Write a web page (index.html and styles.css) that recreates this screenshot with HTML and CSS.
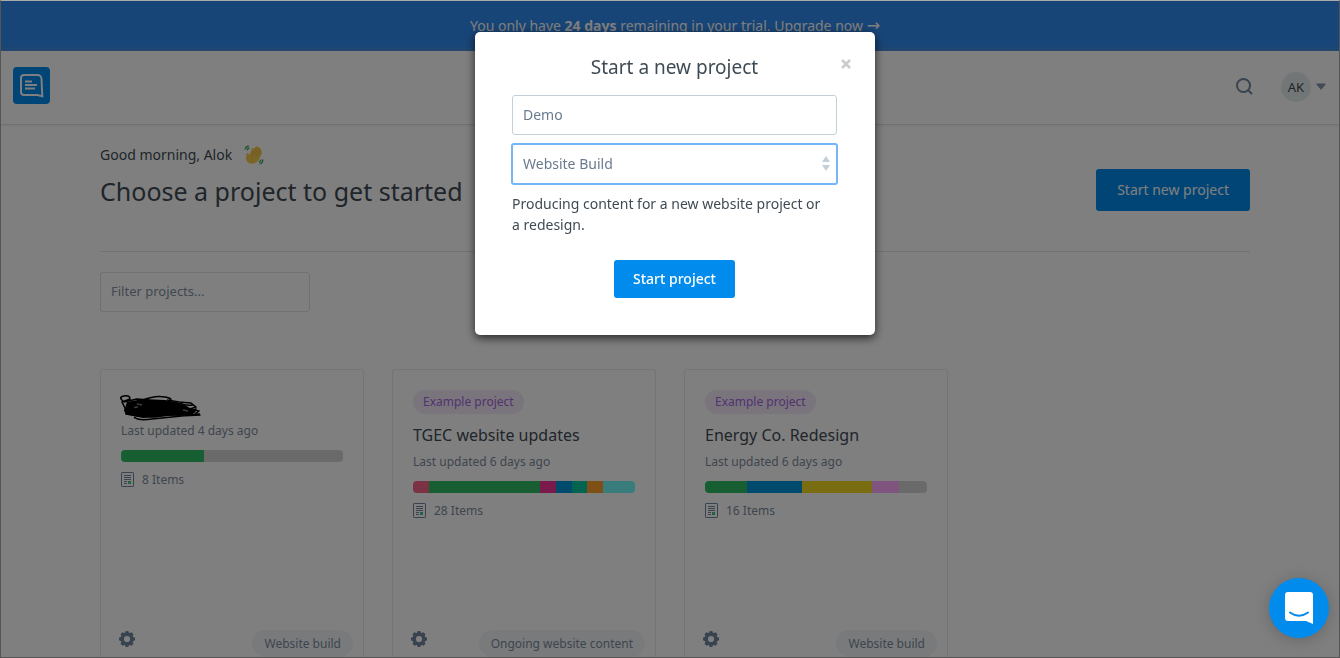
FILE: index.html
```html
<!DOCTYPE html>
<html lang="en">
<head>
    <meta charset="UTF-8">
    <meta name="viewport" content="width=device-width, initial-scale=1.0">
    <title>Projects</title>
    <link rel="stylesheet" href="styles.css">
</head>
<body>
    <svg class="sprite" aria-hidden="true">
        <symbol id="icon-items" viewBox="0 0 13 15">
            <rect x="0.5" y="0.5" width="12" height="14" rx="0.6" fill="none" stroke="#73869f"/>
            <path d="M3 3.5h7M3 5.5h7M3 7.5h7M3 9.5h3M3 11.5h3" fill="none" stroke="#73869f"/>
            <rect x="7" y="9" width="3" height="3" fill="#47c97e"/>
        </symbol>
        <symbol id="icon-gear" viewBox="0 0 16 16">
            <path fill="#73869f" fill-rule="evenodd" d="M6.7 0h2.600l.6 1.700.8.300 1.800-.8 2 2-.8 1.800.3.800 2 .9v2.600l-2 .9-.3.800.8 1.800-2 2-1.800-.8-.8.300-.6 1.700H6.700l-.6-1.700-.8-.3-1.800.8-2-2 .8-1.800-.3-.8-2-.9V6.700l2-.9.3-.8-.8-1.800 2-2 1.800.8.8-.3zM8 4.900a3.100 3.100 0 1 0 0 6.200 3.100 3.100 0 0 0 0-6.200z"/>
        </symbol>
    </svg>

    <div class="trial-banner">
        <span>You only have <strong>24 days</strong> remaining in your trial. <a href="#">Upgrade now <span class="arrow">→</span></a></span>
    </div>

    <header class="header">
        <a class="logo" href="#" aria-label="Home">
            <svg width="37" height="37" viewBox="0 0 37 37">
                <path d="M11 8h13.500a4 4 0 0 1 4 4l.8 17.300-5-1.300H11a3 3 0 0 1-3-3V11a3 3 0 0 1 3-3z" fill="none" stroke="#fff" stroke-width="2"/>
                <path d="M12 14.500h7M12 18h12M12 21.500h10" fill="none" stroke="#fff" stroke-width="2"/>
            </svg>
        </a>
        <div class="header-actions">
            <button class="icon-button" type="button" aria-label="Search">
                <svg width="17" height="17" viewBox="0 0 17 17" fill="none" stroke="#73869f" stroke-width="2">
                    <circle cx="7.500" cy="7.500" r="6.500"/>
                    <path d="M12 12l4 4"/>
                </svg>
            </button>
            <button class="user-menu" type="button">
                <span class="avatar">AK</span>
                <svg width="10" height="7" viewBox="0 0 10 7"><path d="M1 .5h8q1 0 .5 1L5.600 6.200q-.6.700-1.200 0L.5 1.500Q0 .5 1 .5z" fill="#8494ab"/></svg>
            </button>
        </div>
    </header>

    <main class="content">
        <section class="intro">
            <div>
                <p class="greeting">Good morning, Alok
                    <svg width="20" height="20" viewBox="0 0 20 20" aria-hidden="true">
                        <path d="M2.500 9.500Q2.300 7.600 4 8.200l1.500 1.500L8 3.600q1.200-1.600 2 .2L12 1.500q1.600-.8 1.700.9l1.100-.5q1.500 0 1 1.600l.8.200q1.300.6.500 2l.6.600q.8.900 0 2.200L15 14.500Q12.500 19.200 7.500 18.800 1.500 18 2 12z" fill="#f5c84c"/>
                        <path d="M6 12.500q2.500-1 3-3.500M8.800 8.500l3.700-5.600M10.800 9.500l4-6M12.600 10.700l3.900-5.500" fill="none" stroke="#d9ab3a" stroke-width=".6"/>
                        <path d="M1 4.500Q1.500 1.500 4.800 1M3 5.500Q3.300 3.600 5.500 3M18.800 14.500q.2 3.500-3.300 4.500M17 14.500q.2 2-2.200 2.700" fill="none" stroke="#43ad5b" stroke-width="1.300"/>
                    </svg>
                </p>
                <h1>Choose a project to get started</h1>
            </div>
            <button class="button button-large" type="button">Start new project</button>
        </section>

        <input class="field filter" type="text" placeholder="Filter projects..." aria-label="Filter projects">

        <section class="projects">
            <article class="card">
                <div class="card-body">
                    <h2 class="card-title">
                        <svg class="scribble" width="84" height="26" viewBox="0 0 84 26" aria-hidden="true">
                            <path d="M8 7l16-3 22 1 16 3 9 5 6 4-5 3-22 1-26 2-14-3-5-4z"/>
                            <path d="M18 9l5 1M15 12.500l4-.5M64 15l5 1" fill="none" stroke="#777" stroke-width="1.500"/>
                            <path d="M4 6Q-1 2 5 1t6 3l-8 3 3 6 1 6 12 2 16 1 20-3M24 5Q36 0 46 2t3 4M5 7l13-3 12 1M48 5l12 2 12 1 5 4-6 2 9 2-5 4 6 0-20 1M60 8q6 3 14 2M57 12l20 3-6 4 6-5-10 6 14-1M15 22q4 4 18 2l30-3M6 17q8 3 24 2l32 1" fill="none" stroke="#000" stroke-width="1.600" stroke-linejoin="round"/>
                        </svg>
                    </h2>
                    <p class="updated">Last updated 4 days ago</p>
                    <div class="progress">
                        <span class="green" style="flex-grow: 3"></span>
                        <span class="grey" style="flex-grow: 5"></span>
                    </div>
                    <p class="items"><svg width="13" height="15"><use href="#icon-items"/></svg>8 Items</p>
                </div>
                <footer class="card-footer">
                    <button class="icon-button" type="button" aria-label="Settings"><svg width="16" height="16"><use href="#icon-gear"/></svg></button>
                    <span class="type">Website build</span>
                </footer>
            </article>

            <article class="card">
                <div class="card-body">
                    <span class="example">Example project</span>
                    <h2 class="card-title">TGEC website updates</h2>
                    <p class="updated">Last updated 6 days ago</p>
                    <div class="progress">
                        <span class="red" style="flex-grow: 2"></span>
                        <span class="green" style="flex-grow: 14"></span>
                        <span class="magenta" style="flex-grow: 2"></span>
                        <span class="blue" style="flex-grow: 2"></span>
                        <span class="teal" style="flex-grow: 2"></span>
                        <span class="orange" style="flex-grow: 2"></span>
                        <span class="cyan" style="flex-grow: 4"></span>
                    </div>
                    <p class="items"><svg width="13" height="15"><use href="#icon-items"/></svg>28 Items</p>
                </div>
                <footer class="card-footer">
                    <button class="icon-button" type="button" aria-label="Settings"><svg width="16" height="16"><use href="#icon-gear"/></svg></button>
                    <span class="type">Ongoing website content</span>
                </footer>
            </article>

            <article class="card">
                <div class="card-body">
                    <span class="example">Example project</span>
                    <h2 class="card-title">Energy Co. Redesign</h2>
                    <p class="updated">Last updated 6 days ago</p>
                    <div class="progress">
                        <span class="green" style="flex-grow: 3"></span>
                        <span class="blue" style="flex-grow: 4"></span>
                        <span class="yellow" style="flex-grow: 5"></span>
                        <span class="pink" style="flex-grow: 2"></span>
                        <span class="grey" style="flex-grow: 2"></span>
                    </div>
                    <p class="items"><svg width="13" height="15"><use href="#icon-items"/></svg>16 Items</p>
                </div>
                <footer class="card-footer">
                    <button class="icon-button" type="button" aria-label="Settings"><svg width="16" height="16"><use href="#icon-gear"/></svg></button>
                    <span class="type">Website build</span>
                </footer>
            </article>
        </section>
    </main>

    <div class="overlay">
        <form class="modal" role="dialog" aria-labelledby="modalTitle">
            <h2 id="modalTitle">Start a new project</h2>
            <button class="close" type="button" aria-label="Close">
                <svg width="10" height="10" viewBox="0 0 10 10"><path d="M1 1l8 8M9 1L1 9" fill="none" stroke="#ccc" stroke-width="2.500"/></svg>
            </button>
            <input class="field" type="text" value="Demo" aria-label="Project name">
            <div class="select">
                <select class="field" aria-label="Project type">
                    <option>Website Build</option>
                </select>
                <svg width="8" height="15" viewBox="0 0 8 15" aria-hidden="true"><path d="M0 6l4-6 4 6zM0 9h8l-4 6z" fill="#c3d0d8"/></svg>
            </div>
            <p class="description">Producing content for a new website project or a redesign.</p>
            <button class="button button-primary" type="submit">Start project</button>
        </form>
    </div>

    <button class="messenger" type="button" aria-label="Open messenger">
        <svg width="28" height="32" viewBox="0 0 28 32">
            <path d="M3 0h22a3 3 0 0 1 3 3v29l-7-3H3a3 3 0 0 1-3-3V3a3 3 0 0 1 3-3z" fill="#fff"/>
            <path d="M5 20.500q9 6.500 18 0" fill="none" stroke="#018bec" stroke-width="2" stroke-linecap="round"/>
        </svg>
    </button>
</body>
</html>
```
FILE: styles.css
```css
* {
    margin: 0;
    padding: 0;
    box-sizing: border-box;
}
body {
    height: 100vh;
    overflow: hidden;
    background: #fff;
    color: #3f4b54;
    font-family: 'Noto Sans', 'Open Sans', sans-serif;
    font-size: 14px;
    line-height: 21px;
}
button, input, select {
    font: inherit;
    color: inherit;
}
button {
    border: none;
    background: none;
    cursor: pointer;
}
svg {
    display: block;
}
h1, h2 {
    font-weight: 400;
}
.sprite {
    display: none;
}

/* Top of the page */
.trial-banner {
    display: flex;
    justify-content: center;
    align-items: center;
    height: 51px;
    padding-left: 10px;
    background: linear-gradient(#308aee 46px, #4a8edc);
    color: #fff;
}
.trial-banner a {
    color: inherit;
    text-decoration: none;
}
.arrow {
    font-family: 'DejaVu Sans', sans-serif;
    font-size: 16px;
}
.header {
    display: flex;
    justify-content: space-between;
    align-items: center;
    height: 74px;
    padding: 0 14px 2px 13px;
    border-bottom: 1px solid #dbe3e7;
    box-shadow: 0 1px 2px rgba(0, 0, 0, 0.05);
}
.logo {
    margin-bottom: 2px;
    border-radius: 4px;
    background: #018bec;
}
.header-actions {
    display: flex;
    align-items: center;
    gap: 28px;
}
.user-menu {
    display: flex;
    align-items: center;
    gap: 5px;
}
.avatar {
    width: 30px;
    border-radius: 50%;
    background: #e6edef;
    font-size: 13px;
    line-height: 30px;
}

/* Project list */
.content {
    padding: 19px 90px 0 100px;
}
.intro {
    display: flex;
    justify-content: space-between;
    align-items: center;
    height: 108px;
    padding-bottom: 15px;
    border-bottom: 1px solid #e2e5e5;
    margin-bottom: 20px;
}
.intro > div {
    align-self: flex-start;
}
.greeting {
    display: flex;
    align-items: center;
    gap: 12px;
}
h1 {
    margin-top: 8px;
    font-size: 25px;
    line-height: 36px;
}
.button {
    border-radius: 3px;
    background: #018bec;
    color: #fff;
}
.button-large {
    padding: 0 21px;
    line-height: 42px;
}
.field {
    display: block;
    width: 100%;
    height: 40px;
    padding: 0 10px 2px;
    border: 1px solid #c3d0d8;
    border-radius: 3px;
    background: #fff;
    color: #6b7b8e;
    outline: none;
}
.filter {
    width: 210px;
    border-color: #dfe2e3;
    font-size: 13px;
}
.filter::placeholder {
    color: #8290a3;
}
.projects {
    display: grid;
    grid-template-columns: repeat(auto-fill, 264px);
    gap: 28px;
    margin-top: 57px;
}
.card {
    display: flex;
    flex-direction: column;
    justify-content: space-between;
    min-height: 300px;
    border: 1px solid #e6e8e9;
    border-radius: 3px;
    color: #7e8b9c;
    font-size: 12px;
}
.card-body {
    padding: 20px;
}
.example {
    display: inline-block;
    margin-bottom: 7px;
    padding: 0 10px;
    border-radius: 12px;
    background: #f4eafa;
    color: #a466e0;
    line-height: 24px;
    vertical-align: top;
}
.card-title {
    display: flex;
    height: 28px;
    color: #3f4b54;
    font-size: 16px;
    line-height: 28px;
}
/* The blacked-out name spills a little past the title line */
.scribble {
    margin: 5px 0 0 -2px;
}
.updated {
    margin-bottom: 6px;
    line-height: 26px;
}
.progress {
    display: flex;
    height: 12px;
    margin-bottom: 7px;
    border-radius: 4px;
    overflow: hidden;
}
.green { background: #2fbe66; }
.grey { background: #d4d4d4; }
.red { background: #f7658a; }
.magenta { background: #f43494; }
.blue { background: #0094dc; }
.teal { background: #00c8a0; }
.orange { background: #ffa12b; }
.cyan { background: #73f8f8; }
.yellow { background: #f4d820; }
.pink { background: #ffa8ff; }
.items {
    display: flex;
    align-items: center;
    gap: 8px;
}
.card-footer {
    display: flex;
    justify-content: space-between;
    align-items: center;
    padding: 0 10px 11px 18px;
}
.card-footer .icon-button {
    margin-bottom: 9px;
}
.type {
    padding: 0 12px;
    border-radius: 14px;
    background: #f0f5f8;
    line-height: 27px;
}

/* Dialog */
.overlay {
    position: fixed;
    inset: 0;
    display: flex;
    justify-content: center;
    align-items: flex-start;
    padding: 31px 0 0 10px;
    border: 1px solid #555;
    border-top-color: #aaa;
    background: rgba(0, 0, 0, 0.5);
}
.modal {
    position: relative;
    width: 400px;
    padding: 20px 38px 37px 37px;
    border-radius: 5px;
    background: #fff;
    box-shadow: 0 3px 10px rgba(0, 0, 0, 0.7);
}
.modal h2 {
    margin-bottom: 13px;
    font-size: 19px;
    line-height: 30px;
    text-align: center;
}
.close {
    position: absolute;
    top: 27px;
    right: 24px;
}
.select {
    position: relative;
    margin: 9px 0;
}
.select select {
    appearance: none;
    border-color: #74b7f9;
    border-radius: 2px;
    box-shadow: 0 0 0 1px #74b7f9;
}
.select svg {
    position: absolute;
    top: 12px;
    right: 7px;
    pointer-events: none;
}
.description {
    margin-bottom: 25px;
    padding-right: 6px;
}
.button-primary {
    display: block;
    margin: 0 auto;
    padding: 0 19px;
    font-weight: 500;
    line-height: 38px;
}

.messenger {
    position: fixed;
    right: 11px;
    bottom: 20px;
    display: flex;
    justify-content: center;
    align-items: center;
    width: 60px;
    height: 60px;
    border-radius: 50%;
    background: #018bec;
    box-shadow: 0 2px 16px rgba(0, 0, 0, 0.2);
}
```
